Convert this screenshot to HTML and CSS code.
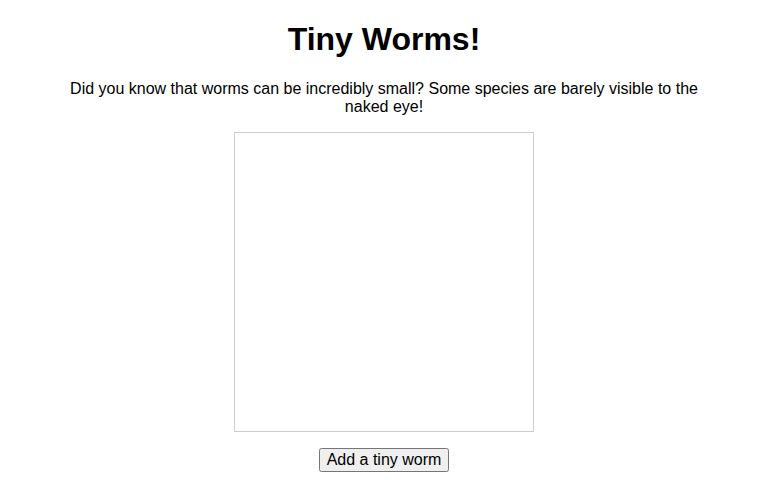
FILE: index.html
```html
<!DOCTYPE html>
<html lang="en">
<head>
    <meta charset="UTF-8">
    <meta name="viewport" content="width=device-width, initial-scale=1.0">
    <title>Tiny Worms!</title>
    <link rel="stylesheet" href="styles.css">
</head>
<body>
    <h1>Tiny Worms!</h1>
    <p class="intro">Did you know that worms can be incredibly small? Some species are barely visible to the naked eye!</p>
    <div class="worm-box" id="wormBox"></div>
    <div class="controls">
        <button class="add-button" id="addBtn">Add a tiny worm</button>
    </div>
</body>
</html>
```

FILE: styles.css
```css
body {
    font-family: "Liberation Sans", Arial, sans-serif;
    text-align: center;
    margin: 0;
    color: #000000;
    background-color: #ffffff;
}
h1 {
    font-size: 32px;
    margin: 0.67em 0;
}
.intro {
    font-size: 16px;
    max-width: 640px;
    margin: 16px auto;
}
.worm-box {
    width: 300px;
    height: 300px;
    box-sizing: border-box;
    border: 1px solid #cccccc;
    margin: 0 auto;
    background-color: #ffffff;
}
.controls {
    margin-top: 16px;
}
.add-button {
    font-family: "Liberation Sans", Arial, sans-serif;
    font-size: 16px;
}
```
